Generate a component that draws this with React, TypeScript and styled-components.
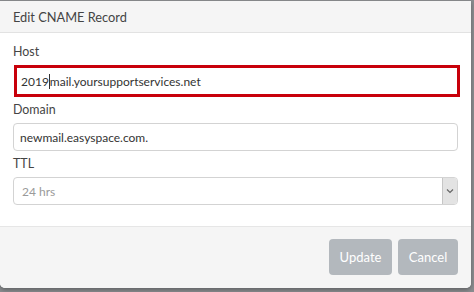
import styled, { createGlobalStyle } from "styled-components";

const GlobalStyle = createGlobalStyle`
  html, body {
    margin: 0;
    padding: 0;
    background: #7d7f82;
    font-family: Lato, "Open Sans", "Liberation Sans", sans-serif;
  }
  * { box-sizing: border-box; }
`;

const Page = styled.div`
  width: 474px;
  height: 292px;
  padding-top: 1px;
  overflow: hidden;
  background: #8a8c8f;
`;

const Modal = styled.div`
  width: 471px;
  background: #fff;
  border-radius: 0 0 5px 5px;
  box-shadow: 0 2px 4px rgba(0, 0, 0, 0.3);
  overflow: hidden;
`;

const Header = styled.div`
  height: 32px;
  display: flex;
  align-items: center;
  padding: 0 13px;
  background: #f5f5f5;
  border-bottom: 1px solid #e2e2e2;
  color: #444;
  font-size: 12.8px;
`;

const Body = styled.div`
  padding: 10px 13px 21px 13px;
  display: flex;
  flex-direction: column;
`;

const Label = styled.label`
  font-size: 12.4px;
  color: #444;
  line-height: 18px;
  margin-bottom: 4px;
`;

const Field = styled.div<{ $highlight?: boolean }>`
  height: ${({ $highlight }) => ($highlight ? "32px" : "28px")};
  width: ${({ $highlight }) => ($highlight ? "446px" : "445px")};
  margin-left: ${({ $highlight }) => ($highlight ? "1px" : "0")};
  border: ${({ $highlight }) =>
    $highlight ? "3px solid #c8000a" : "1px solid #d3d3d3"};
  border-radius: ${({ $highlight }) => ($highlight ? "0" : "4px")};
  display: flex;
  align-items: center;
  padding-left: ${({ $highlight }) => ($highlight ? "4px" : "6px")};
  font-size: 12px;
  color: #333;
  margin-bottom: 4px;
  background: #fff;
`;

const Cursor = styled.span`
  display: inline-block;
  width: 1px;
  height: 15px;
  background: #333;
`;

const Select = styled.div`
  height: 28px;
  width: 445px;
  border: 1px solid #d3d3d3;
  border-radius: 4px;
  display: flex;
  align-items: stretch;
  font-size: 12px;
  color: #9a9a9a;
  overflow: hidden;
`;

const SelectValue = styled.div`
  flex: 1;
  display: flex;
  align-items: center;
  padding-left: 8px;
`;

const Arrow = styled.div`
  width: 15px;
  background: #e3e3e3;
  border-left: 1px solid #c6c6c6;
  display: flex;
  align-items: center;
  justify-content: center;
`;

const Footer = styled.div`
  height: 62px;
  background: #f5f5f5;
  border-top: 1px solid #e6e6e6;
  display: flex;
  justify-content: flex-end;
  align-items: flex-start;
  gap: 6px;
  padding: 12px 13px 0 0;
`;

const Button = styled.button<{ $w: number }>`
  width: ${({ $w }) => $w}px;
  height: 36px;
  border: none;
  border-radius: 4px;
  background: #b3b8bd;
  color: #fff;
  font-family: inherit;
  font-size: 13px;
  padding: 0;
`;

export default function App() {
  return (
    <Page>
      <GlobalStyle />
      <Modal>
        <Header>Edit CNAME Record</Header>
        <Body>
          <Label>Host</Label>
          <Field $highlight>
            2019
            <Cursor />
            mail.yoursupportservices.net
          </Field>
          <Label>Domain</Label>
          <Field>newmail.easyspace.com.</Field>
          <Label>TTL</Label>
          <Select>
            <SelectValue>24 hrs</SelectValue>
            <Arrow>
              <svg width="8" height="6" viewBox="0 0 8 6">
                <path d="M1 1.5 L4 4.5 L7 1.5" fill="none" stroke="#666" strokeWidth="1.2" />
              </svg>
            </Arrow>
          </Select>
        </Body>
        <Footer>
          <Button $w={63}>Update</Button>
          <Button $w={60}>Cancel</Button>
        </Footer>
      </Modal>
    </Page>
  );
}
